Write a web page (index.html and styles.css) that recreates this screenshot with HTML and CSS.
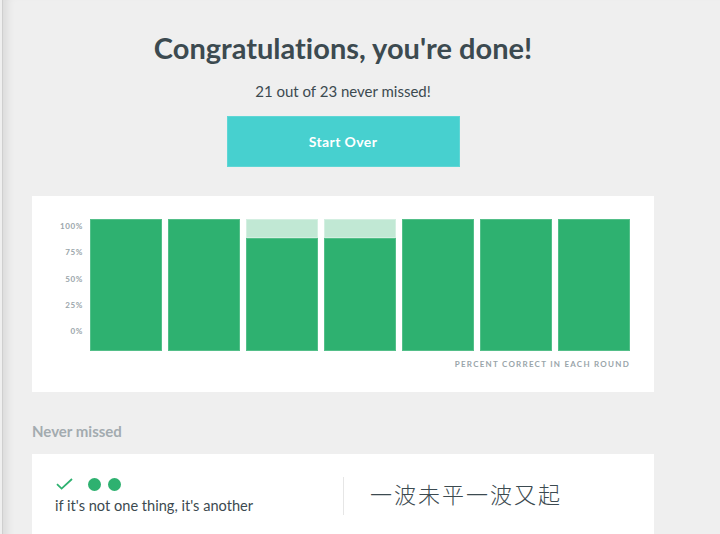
FILE: index.html
```html
<!DOCTYPE html>
<html lang="en">
<head>
<meta charset="utf-8">
<title>Done</title>
<link rel="stylesheet" href="styles.css">
</head>
<body>
<div class="app">
  <main class="main">
    <header class="summary">
      <h1 class="title">Congratulations, you're done!</h1>
      <p class="subtitle">21 out of 23 never missed!</p>
      <button class="restart" type="button">Start Over</button>
    </header>

    <section class="card chart-card">
      <div class="chart">
        <div class="axis">
          <span class="tick">100%</span>
          <span class="tick">75%</span>
          <span class="tick">50%</span>
          <span class="tick">25%</span>
          <span class="tick">0%</span>
        </div>
        <div class="bars">
          <div class="bar"><div class="fill" style="height:100%"></div></div>
          <div class="bar"><div class="fill" style="height:100%"></div></div>
          <div class="bar"><div class="miss"></div><div class="fill" style="height:85.7%"></div></div>
          <div class="bar"><div class="miss"></div><div class="fill" style="height:85.7%"></div></div>
          <div class="bar"><div class="fill" style="height:100%"></div></div>
          <div class="bar"><div class="fill" style="height:100%"></div></div>
          <div class="bar"><div class="fill" style="height:100%"></div></div>
        </div>
      </div>
      <p class="caption">Percent correct in each round</p>
    </section>

    <h2 class="section-title">Never missed</h2>

    <section class="card word-card">
      <div class="word-left">
        <div class="marks">
          <svg class="check" width="17" height="12" viewBox="0 0 17 12" aria-hidden="true"><path d="M1 6.2 L5.6 10.6 L16 1" fill="none" stroke="#2eb170" stroke-width="1.8"/></svg>
          <span class="dot"></span>
          <span class="dot"></span>
        </div>
        <p class="meaning">if it's not one thing, it's another</p>
      </div>
      <div class="word-right">
        <p class="hanzi">一波未平一波又起</p>
      </div>
    </section>
  </main>
</div>
</body>
</html>
```

FILE: styles.css
```css
html, body {
  margin: 0;
  padding: 0;
}
body {
  background: #efefef;
  font-family: "Lato", "Liberation Sans", sans-serif;
  font-variant-ligatures: none;
  color: #3c4a50;
  height: 534px;
  overflow: hidden;
}
.app {
  margin-left: 2px;
  border-left: 1px solid #cfcfcf;
  min-height: 534px;
  box-shadow: inset 10px 0 8px -6px rgba(0, 0, 0, 0.09);
}
.main {
  width: 622px;
  margin-left: 29px;
}
.summary {
  display: flex;
  flex-direction: column;
  align-items: center;
  padding-top: 31px;
}
.title {
  margin: 0;
  font-size: 29px;
  line-height: 34px;
  font-weight: 700;
  color: #3c4a50;
}
.subtitle {
  margin: 16px 0 0;
  font-size: 15px;
  line-height: 20px;
  font-weight: 400;
  color: #3c4a50;
}
.restart {
  margin-top: 15px;
  width: 233px;
  height: 51px;
  border: 1px solid #5fd6d5;
  background: #47d0cf;
  color: #fff;
  font-family: inherit;
  font-size: 14px;
  font-weight: 700;
  letter-spacing: 0.4px;
}
.card {
  background: #fff;
}
.chart-card {
  margin-top: 29px;
  padding: 23px 24px 22px 0;
}
.chart {
  display: flex;
  gap: 7px;
}
.axis {
  width: 51px;
  margin-top: -6px;
  display: flex;
  flex-direction: column;
  align-items: flex-end;
}
.tick {
  height: 26.3px;
  line-height: 26.3px;
  font-size: 8px;
  font-weight: 700;
  letter-spacing: 0.6px;
  color: #9aa5aa;
}
.bars {
  flex: 1;
  height: 132px;
  display: flex;
  gap: 6px;
}
.bar {
  flex: 1;
  display: flex;
  flex-direction: column;
}
.miss {
  flex: 1;
  background: #c1e8d4;
  box-shadow: inset 0 0 0 1px rgba(255, 255, 255, 0.3);
}
.fill {
  background: #2eb170;
  box-shadow: inset 0 0 0 1px rgba(255, 255, 255, 0.18);
}
.caption {
  margin: 7px 0 0;
  text-align: right;
  font-size: 8px;
  font-weight: 700;
  line-height: 12px;
  letter-spacing: 1.25px;
  text-transform: uppercase;
  color: #9aa5aa;
}
.section-title {
  margin: 30px 0 0;
  font-size: 15px;
  line-height: 18px;
  font-weight: 700;
  color: #a3abaf;
}
.word-card {
  margin-top: 14px;
  display: grid;
  grid-template-columns: 1fr 1fr;
  padding: 23px 0 30px;
}
.word-left {
  padding-left: 23px;
}
.marks {
  display: flex;
  align-items: center;
  height: 14px;
  padding-left: 1px;
  gap: 7px;
}
.check {
  margin-right: 8px;
}
.dot {
  width: 13px;
  height: 13px;
  border-radius: 50%;
  background: #2eb170;
}
.meaning {
  margin: 6px 0 0;
  font-size: 14.6px;
  line-height: 18px;
  color: #3c4a50;
}
.word-right {
  border-left: 1px solid #e6e6e6;
  display: flex;
  align-items: center;
  padding-left: 26px;
}
.hanzi {
  margin: 0 0 6px;
  font-family: "Noto Sans CJK SC", sans-serif;
  font-weight: 300;
  font-size: 22px;
  letter-spacing: 2px;
  color: #3c4a50;
}
```
